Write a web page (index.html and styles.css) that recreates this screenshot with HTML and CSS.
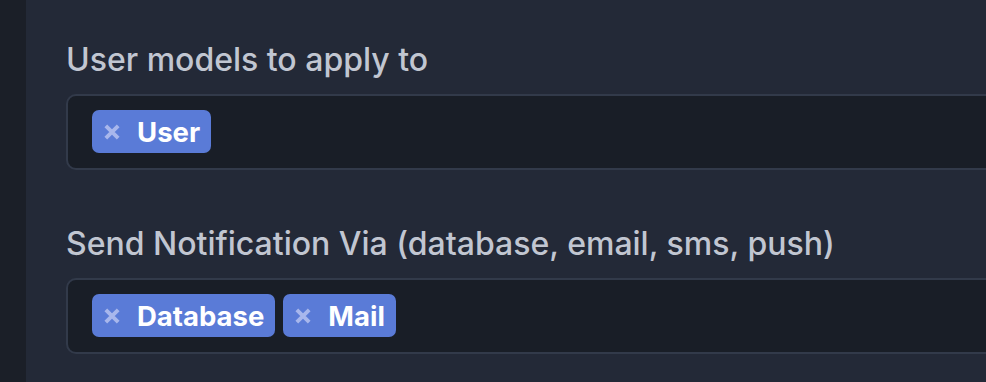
FILE: index.html
```html
<!DOCTYPE html>
<html>
<head>
<meta charset="utf-8">
<link rel="stylesheet" href="styles.css">
</head>
<body>
<div class="layout">
  <aside class="sidebar"></aside>
  <main class="main">
    <div class="field">
      <label class="label">User models to apply to</label>
      <div class="select">
        <span class="tag"><svg class="x" viewBox="0 0 16 16"><path d="M2.5 2.5l11 11M13.5 2.5l-11 11"/></svg><span>User</span></span>
      </div>
    </div>
    <div class="field">
      <label class="label">Send Notification Via (database, email, sms, push)</label>
      <div class="select">
        <span class="tag"><svg class="x" viewBox="0 0 16 16"><path d="M2.5 2.5l11 11M13.5 2.5l-11 11"/></svg><span>Database</span></span>
        <span class="tag"><svg class="x" viewBox="0 0 16 16"><path d="M2.5 2.5l11 11M13.5 2.5l-11 11"/></svg><span>Mail</span></span>
      </div>
    </div>
  </main>
</div>
</body>
</html>
```
FILE: styles.css
```css
html, body {
  margin: 0;
  padding: 0;
  height: 100%;
  background: #232937;
  font-family: Inter, "Noto Sans", sans-serif;
  overflow: hidden;
}
* {
  box-sizing: border-box;
}
.layout {
  display: flex;
  height: 100%;
}
.sidebar {
  width: 26px;
  flex: none;
  background: #1b1f28;
}
.main {
  flex: 1;
  padding: 40px 0 0 40px;
  display: flex;
  flex-direction: column;
  gap: 54px;
}
.field {
  display: flex;
  flex-direction: column;
  gap: 14px;
}
.label {
  font-size: 32px;
  line-height: 40px;
  font-weight: 500;
  color: #c1c6d1;
}
.select {
  margin-right: -20px;
  height: 76px;
  border: 2px solid #323a4a;
  border-radius: 10px;
  background: #191e27;
  display: flex;
  align-items: flex-start;
  gap: 8px;
  padding: 14px 24px 0;
}
.tag {
  display: inline-flex;
  align-items: center;
  height: 43px;
  padding: 0 11px;
  gap: 16px;
  background: #5a7bd7;
  border-radius: 7px;
  color: #fff;
  font-size: 27.5px;
  font-weight: 700;
}
.x {
  width: 18px;
  height: 18px;
  fill: none;
  stroke: #a8b7ec;
  stroke-width: 3.4;
  stroke-linecap: butt;
}
```
